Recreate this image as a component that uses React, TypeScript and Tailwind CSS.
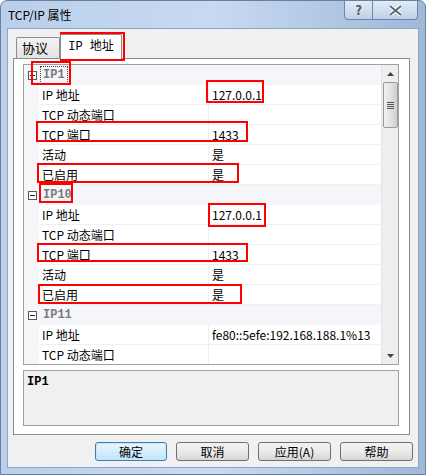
import React from "react";

type Row = { label: string; value?: string };
type Group = { name: string; rows: Row[] };

const groups: Group[] = [
  {
    name: "IP1",
    rows: [
      { label: "IP 地址", value: "127.0.0.1" },
      { label: "TCP 动态端口" },
      { label: "TCP 端口", value: "1433" },
      { label: "活动", value: "是" },
      { label: "已启用", value: "是" },
    ],
  },
  {
    name: "IP10",
    rows: [
      { label: "IP 地址", value: "127.0.0.1" },
      { label: "TCP 动态端口" },
      { label: "TCP 端口", value: "1433" },
      { label: "活动", value: "是" },
      { label: "已启用", value: "是" },
    ],
  },
  {
    name: "IP11",
    rows: [
      { label: "IP 地址", value: "fe80::5efe:192.168.188.1%13" },
      { label: "TCP 动态端口" },
    ],
  },
];

// red annotation boxes drawn over the screenshot
const marks = [
  { l: 60, t: 32, w: 65, h: 29 },
  { l: 31, t: 61, w: 40, h: 24 },
  { l: 206, t: 80, w: 58, h: 23 },
  { l: 36, t: 121, w: 212, h: 21 },
  { l: 37, t: 163, w: 202, h: 20 },
  { l: 39, t: 183, w: 34, h: 20 },
  { l: 208, t: 203, w: 58, h: 24 },
  { l: 37, t: 243, w: 211, h: 19 },
  { l: 38, t: 284, w: 204, h: 20 },
];

function Minus() {
  return (
    <div className="w-[9px] h-[9px] border border-[#5a5a5a] bg-white flex items-center justify-center">
      <div className="w-[5px] h-px bg-[#222]" />
    </div>
  );
}

function Btn({ label, primary }: { label: string; primary?: boolean }) {
  return (
    <div
      className={
        primary
          ? "w-[72px] h-[19px] rounded-[3px] border border-[#3c7fb1] bg-gradient-to-b from-[#eaf6fd] to-[#bee6fd] flex items-center justify-center shadow-[inset_0_0_0_1px_#c9e6f8]"
          : "w-[73px] h-[19px] rounded-[3px] border border-[#707070] bg-gradient-to-b from-[#f2f2f2] via-[#ebebeb] to-[#d6d6d6] flex items-center justify-center"
      }
    >
      <span className="text-[12px] text-black">{label}</span>
    </div>
  );
}

export default function App() {
  return (
    <div
      className="relative w-[426px] h-[475px] overflow-hidden rounded-t-[7px] border border-[#6b7f9c] bg-gradient-to-r from-[#b9cfea] via-[#c7daf1] to-[#9fb8d8] flex flex-col"
      style={{ fontFamily: '"Noto Sans CJK SC", "Liberation Sans", sans-serif' }}
    >
      {/* title bar */}
      <div className="h-[27px] flex items-start shrink-0">
        <div className="pl-[7px] pt-[5px] text-[12px] leading-[18px] text-black">TCP/IP 属性</div>
        <div className="ml-auto flex mr-[7px] -mt-px">
          <div className="w-[29px] h-[20px] border border-[#6d84a6] rounded-bl-[4px] bg-gradient-to-b from-[#e3ecf7] to-[#bdd0e8] flex items-center justify-center text-[13px] font-bold text-[#555]">
            ?
          </div>
          <div className="w-[45px] h-[20px] border border-l-0 border-[#6d84a6] rounded-br-[4px] bg-gradient-to-b from-[#e3ecf7] to-[#bdd0e8] flex items-center justify-center">
            <svg width="13" height="11" viewBox="0 0 13 11">
              <path d="M1 1 L12 10 M12 1 L1 10" stroke="#fff" strokeWidth="4" />
              <path d="M1 1 L12 10 M12 1 L1 10" stroke="#5e6a7a" strokeWidth="2" />
            </svg>
          </div>
        </div>
      </div>

      {/* client area */}
      <div className="mx-[6px] h-[440px] border border-[#8fa5c2] bg-[#f0f0f0] flex flex-col">
        {/* tabs */}
        <div className="h-[29px] pt-[4px] pl-[8px] flex items-end">
          <div className="w-[44px] h-[21px] border border-b-0 border-[#898c95] rounded-t-[2px] bg-gradient-to-b from-[#f2f2f2] to-[#e3e3e3] flex items-center pl-[5px] text-[13px] text-black">
            协议
          </div>
          <div className="relative z-10 -mb-px w-[62px] h-[25px] border border-b-0 border-[#898c95] rounded-t-[2px] bg-white flex items-center justify-center text-[12px] text-black" style={{ fontFamily: '"Liberation Mono", "Noto Sans CJK SC", monospace' }}>
            IP 地址
          </div>
        </div>

        {/* tab panel */}
        <div className="ml-[5px] w-[397px] h-[377px] border border-[#898c95] bg-white pt-[5px] pl-[9px] flex flex-col">
          {/* property grid */}
          <div className="w-[376px] h-[301px] border border-[#a0a0a0] flex">
            <div className="flex-1 flex flex-col overflow-hidden">
              {groups.map((g, gi) => (
                <div key={g.name} className="flex flex-col">
                  <div className="h-[20px] bg-[#f4f6fa] flex items-center shrink-0">
                    <div className="w-[15px] flex justify-center pl-[2px]">
                      <Minus />
                    </div>
                    <div
                      className={
                        gi === 0
                          ? "ml-px h-[18px] px-[2px] border border-dotted border-[#444] flex items-center text-[12px] font-bold text-[#7a7a7a]"
                          : "ml-[2px] px-[2px] text-[12px] font-bold text-[#7a7a7a]"
                      }
                      style={{ fontFamily: '"Liberation Mono", monospace' }}
                    >
                      {g.name}
                    </div>
                  </div>
                  {g.rows.map((r, i) => (
                    <div key={i} className="h-[20px] flex shrink-0">
                      <div className="w-[15px] bg-[#f4f6fa]" />
                      <div className="w-[170px] border-b border-r border-[#edf0f5] flex items-center pl-[3px] text-[12px] text-black">
                        {r.label}
                      </div>
                      <div className="flex-1 border-b border-[#edf0f5] flex items-center pl-[3px] text-[12px] text-black">
                        {r.value}
                      </div>
                    </div>
                  ))}
                </div>
              ))}
            </div>
            {/* scrollbar */}
            <div className="w-[17px] bg-[#eeeeee] border-l border-[#e4e4e4] flex flex-col items-center">
              <div className="h-[17px] flex items-center justify-center">
                <svg width="7" height="4" viewBox="0 0 7 4">
                  <path d="M0 4 L3.5 0 L7 4 Z" fill="#444" />
                </svg>
              </div>
              <div className="w-[15px] h-[46px] rounded-[2px] border border-[#9a9a9a] bg-gradient-to-r from-[#f0f0f0] via-[#e2e2e2] to-[#d0d0d0] flex flex-col items-center justify-center gap-[1px]">
                <div className="w-[7px] h-px bg-[#555]" />
                <div className="w-[7px] h-px bg-[#555]" />
                <div className="w-[7px] h-px bg-[#555]" />
                <div className="w-[7px] h-px bg-[#555]" />
              </div>
              <div className="flex-1" />
              <div className="h-[17px] flex items-center justify-center">
                <svg width="7" height="4" viewBox="0 0 7 4">
                  <path d="M0 0 L7 0 L3.5 4 Z" fill="#444" />
                </svg>
              </div>
            </div>
          </div>

          {/* description */}
          <div className="mt-[5px] w-[376px] h-[56px] border border-[#a0a0a0] bg-[#f0f0f0] pl-[3px] pt-[4px]">
            <div className="text-[12px] font-bold text-black leading-[14px]" style={{ fontFamily: '"Liberation Mono", monospace' }}>
              IP1
            </div>
          </div>
        </div>

        {/* buttons */}
        <div className="mt-[7px] flex gap-[9px] pl-[87px]">
          <Btn label="确定" primary />
          <Btn label="取消" />
          <Btn label="应用(A)" />
          <Btn label="帮助" />
        </div>
      </div>

      {marks.map((m, i) => (
        <div
          key={i}
          className="absolute border-2 border-[#ff0000] pointer-events-none"
          style={{ left: m.l - 1, top: m.t - 1, width: m.w, height: m.h }}
        />
      ))}
    </div>
  );
}
